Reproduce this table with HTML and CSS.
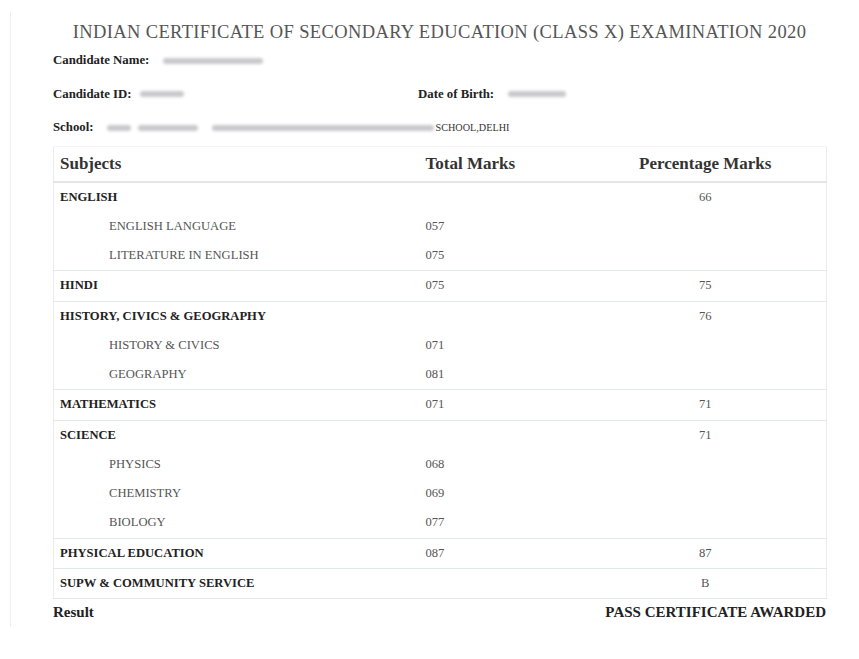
FILE: index.html
```html
<!DOCTYPE html>
<html>
<head>
<meta charset="utf-8">
<link rel="stylesheet" href="styles.css">
</head>
<body>
<div class="page">
  <div class="sheet">
    <h1 class="title">INDIAN CERTIFICATE OF SECONDARY EDUCATION (CLASS X) EXAMINATION 2020</h1>
    <div class="info">
      <div class="info-row"><span class="label">Candidate Name:</span><span class="blur w100"></span></div>
      <div class="info-row"><div class="col1"><span class="label">Candidate ID:</span><span class="blur w44"></span></div><div class="col2"><span class="label">Date of Birth:</span><span class="blur w58"></span></div></div>
      <div class="info-row"><span class="label">School:</span><span class="blur w34"></span><span class="blur w60"></span><span class="blur w225"></span><span class="val">SCHOOL,DELHI</span></div>
    </div>
    <table class="marks">
      <colgroup><col class="k1"><col class="k2"><col class="k3"></colgroup>
      <thead>
        <tr><th class="c-sub">Subjects</th><th class="c-tot">Total Marks</th><th class="c-pct">Percentage Marks</th></tr>
      </thead>
      <tbody>
        <tr class="main"><td>ENGLISH</td><td></td><td class="pct">66</td></tr>
        <tr class="sub"><td>ENGLISH LANGUAGE</td><td>057</td><td></td></tr>
        <tr class="sub"><td>LITERATURE IN ENGLISH</td><td>075</td><td></td></tr>
      </tbody>
      <tbody>
        <tr class="main"><td>HINDI</td><td class="num">075</td><td class="pct">75</td></tr>
      </tbody>
      <tbody>
        <tr class="main"><td>HISTORY, CIVICS &amp; GEOGRAPHY</td><td></td><td class="pct">76</td></tr>
        <tr class="sub"><td>HISTORY &amp; CIVICS</td><td>071</td><td></td></tr>
        <tr class="sub"><td>GEOGRAPHY</td><td>081</td><td></td></tr>
      </tbody>
      <tbody>
        <tr class="main"><td>MATHEMATICS</td><td class="num">071</td><td class="pct">71</td></tr>
      </tbody>
      <tbody>
        <tr class="main"><td>SCIENCE</td><td></td><td class="pct">71</td></tr>
        <tr class="sub"><td>PHYSICS</td><td>068</td><td></td></tr>
        <tr class="sub"><td>CHEMISTRY</td><td>069</td><td></td></tr>
        <tr class="sub"><td>BIOLOGY</td><td>077</td><td></td></tr>
      </tbody>
      <tbody>
        <tr class="main"><td>PHYSICAL EDUCATION</td><td class="num">087</td><td class="pct">87</td></tr>
      </tbody>
      <tbody>
        <tr class="main"><td>SUPW &amp; COMMUNITY SERVICE</td><td></td><td class="pct">B</td></tr>
      </tbody>
    </table>
    <div class="result"><span>Result</span><span>PASS CERTIFICATE AWARDED</span></div>
  </div>
</div>
</body>
</html>
```

FILE: styles.css
```css
html, body { margin: 0; padding: 0; background: #fff; }
body { font-family: "Liberation Serif", "Times New Roman", serif; color: #333; }
.page { padding: 12px 0 0 10px; }
.sheet { border-left: 1px solid #eeeeee; width: 816px; padding: 0 0 6px 42px; box-sizing: border-box; }
.title { margin: 0; padding-top: 10px; width: 773px; text-align: center; font-size: 18.5px; font-weight: normal; color: #555; letter-spacing: 0.37px; line-height: 20px; }
.info { margin-top: 2px; }
.info-row { display: flex; align-items: center; height: 33.5px; font-size: 12.8px; }
.label { font-weight: bold; color: #222; margin-right: 14px; }
.col1 { display: flex; align-items: center; width: 365px; }
.col2 { display: flex; align-items: center; }
.blur { display: inline-block; height: 6px; background: #c9c9cd; border-radius: 3px; filter: blur(1.5px); margin-right: 8px; }
.w100 { width: 100px; }
.w44 { width: 44px; margin-left: -6px; }
.w58 { width: 58px; }
.w34 { width: 24px; margin-left: -1px; margin-right: 7px; }
.w60 { width: 60px; margin-right: 14px; }
.w225 { width: 222px; margin-right: 2px; }
.val { color: #333; font-size: 10.2px; }
.marks { width: 773px; table-layout: fixed; border-collapse: collapse; margin-top: 1px; border-left: 1px solid #ececec; border-right: 1px solid #ececec; }
.k1 { width: 372px; }
.k2 { width: 159px; }
.k3 { width: 242px; }
.marks th { height: 34px; font-size: 17px; font-weight: bold; text-align: left; color: #333; padding: 0; border-bottom: 2px solid #e3e6e6; border-top: 1px solid #f4f4f4; }
.marks th.c-sub { padding-left: 6px; }
.marks th.c-pct { text-align: center; }
.marks tbody { border-bottom: 1px solid #e2e8e7; }
.marks td { height: 29.25px; padding: 0; font-size: 12.6px; color: #555; white-space: nowrap; }
.marks tr.main td:first-child { font-weight: bold; color: #222; padding-left: 6px; }
.marks tr.sub td:first-child { padding-left: 55px; }
.marks td.pct { text-align: center; }
.result { display: flex; justify-content: space-between; width: 773px; font-size: 15px; font-weight: bold; color: #222; margin-top: 5px; line-height: 17px; }
```
